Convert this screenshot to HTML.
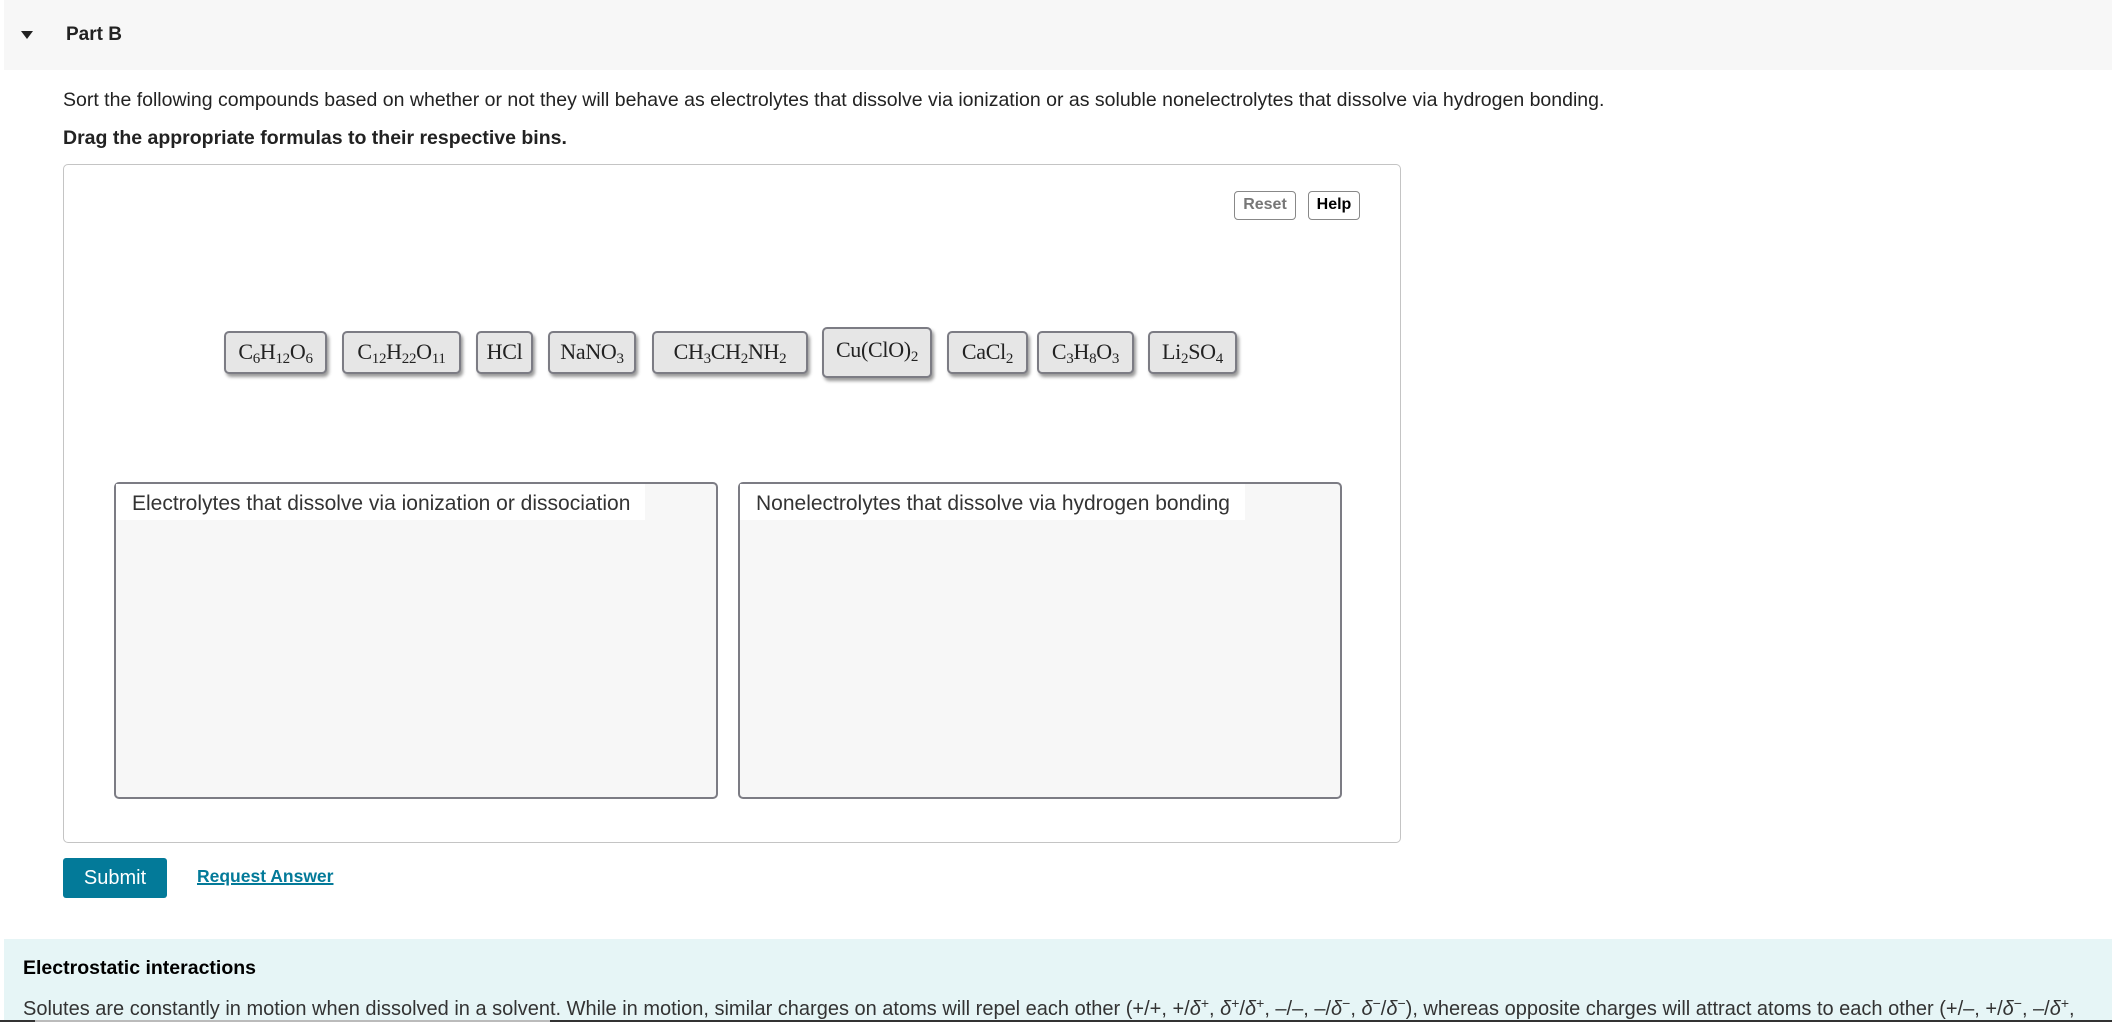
<!DOCTYPE html>
<html><head><style>
*{margin:0;padding:0;box-sizing:border-box}
body{width:2112px;height:1022px;overflow:hidden;background:#fff;font-family:"Liberation Sans",Arial,sans-serif;color:#222;position:relative}
.abs{position:absolute}
.hdr{left:4px;top:0;width:2108px;height:70px;background:#f7f7f7}
.tri{left:21px;top:31px;width:0;height:0;border-left:6px solid transparent;border-right:6px solid transparent;border-top:8px solid #222}
.t{font-size:19.5px;white-space:nowrap}
.box{left:63px;top:164px;width:1338px;height:679px;border:1px solid #c4c4c4;border-radius:5px}
.btn{top:191px;height:29px;border:1px solid #888;border-radius:4px;font-weight:bold;font-size:16px;text-align:center;line-height:26px;background:#fff}
.tile{height:43px;top:331px;background:#e6e6e6;border:2px solid #7c7c84;border-radius:5px;box-shadow:2px 3px 3px #999;font-family:"Liberation Serif","DejaVu Serif",serif;font-size:22px;text-align:center;line-height:38px;color:#222;white-space:nowrap;letter-spacing:-0.3px}
.tile sub{font-size:15px;vertical-align:-4px;line-height:0}
.bin{top:482px;width:604px;height:317px;border:2px solid #7c7c84;border-radius:5px;background:#f7f7f7}
.bin span{position:absolute;left:0;top:0;background:#fff;padding:8px 15px 4px 16px;font-size:21px;color:#333;white-space:nowrap}
.sub{left:63px;top:858px;width:104px;height:40px;background:#037a99;border-radius:3px;color:#fff;font-size:20px;text-align:center;line-height:40px}
.req{left:197px;top:866px;color:#037a99;font-weight:bold;font-size:17.5px;text-decoration:underline;text-decoration-thickness:2px}
.teal{left:4px;top:939px;width:2108px;height:83px;background:#e6f5f6}
sup.s{font-size:14px;vertical-align:7px;line-height:0}
</style></head><body>
<div class="abs hdr"></div>
<div class="abs tri"></div>
<div class="abs t" style="left:66px;top:24px;font-weight:bold;font-size:19px">Part B</div>
<div class="abs t" style="left:63px;top:89px">Sort the following compounds based on whether or not they will behave as electrolytes that dissolve via ionization or as soluble nonelectrolytes that dissolve via hydrogen bonding.</div>
<div class="abs t" style="left:63px;top:127px;font-weight:bold">Drag the appropriate formulas to their respective bins.</div>
<div class="abs box"></div>
<div class="abs btn" style="left:1234px;width:62px;color:#777">Reset</div>
<div class="abs btn" style="left:1308px;width:52px;color:#000">Help</div>
<div class="abs tile" style="left:224px;width:103px">C<sub>6</sub>H<sub>12</sub>O<sub>6</sub></div>
<div class="abs tile" style="left:342px;width:119px">C<sub>12</sub>H<sub>22</sub>O<sub>11</sub></div>
<div class="abs tile" style="left:476px;width:57px">HCl</div>
<div class="abs tile" style="left:548px;width:88px">NaNO<sub>3</sub></div>
<div class="abs tile" style="left:652px;width:156px">CH<sub>3</sub>CH<sub>2</sub>NH<sub>2</sub></div>
<div class="abs tile" style="left:822px;width:110px;top:327px;height:51px;line-height:42px">Cu(ClO)<sub>2</sub></div>
<div class="abs tile" style="left:947px;width:81px">CaCl<sub>2</sub></div>
<div class="abs tile" style="left:1037px;width:97px">C<sub>3</sub>H<sub>8</sub>O<sub>3</sub></div>
<div class="abs tile" style="left:1148px;width:89px">Li<sub>2</sub>SO<sub>4</sub></div>
<div class="abs bin" style="left:114px"><span>Electrolytes that dissolve via ionization or dissociation</span></div>
<div class="abs bin" style="left:738px"><span>Nonelectrolytes that dissolve via hydrogen bonding</span></div>
<div class="abs sub">Submit</div>
<div class="abs req">Request Answer</div>
<div class="abs teal"></div>
<div class="abs t" style="left:23px;top:957px;font-weight:bold;color:#000">Electrostatic interactions</div>
<div class="abs t" style="left:23px;top:998px;font-size:20px;color:#333">Solutes are constantly in motion when dissolved in a solvent. While in motion, similar charges on atoms will repel each other (+/+, +/<i>δ</i><sup class="s">+</sup>, <i>δ</i><sup class="s">+</sup>/<i>δ</i><sup class="s">+</sup>, –/–, –/<i>δ</i><sup class="s">−</sup>, <i>δ</i><sup class="s">−</sup>/<i>δ</i><sup class="s">−</sup>), whereas opposite charges will attract atoms to each other (+/–, +/<i>δ</i><sup class="s">−</sup>, –/<i>δ</i><sup class="s">+</sup>,</div>
<div class="abs" style="left:0;top:1020px;width:2112px;height:2px;background:#333"></div>
<div class="abs" style="left:35px;top:1020px;width:515px;height:2px;background:#bbb"></div>
</body></html>
